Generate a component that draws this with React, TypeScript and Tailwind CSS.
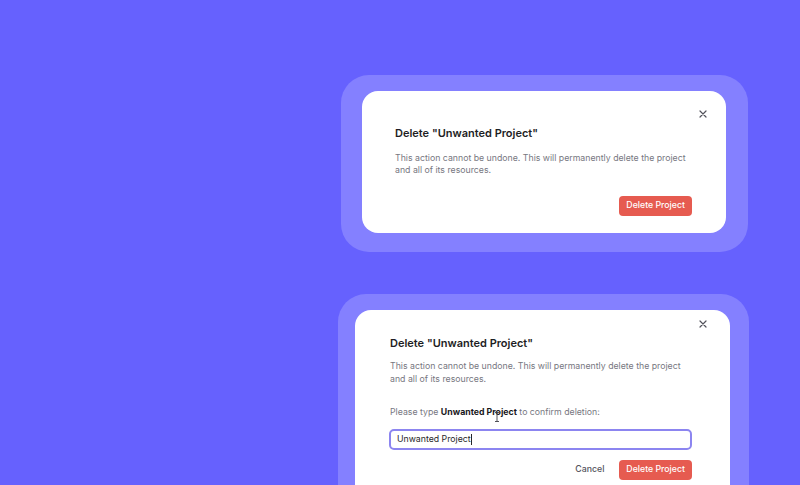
import React from "react";

function CloseIcon() {
  return (
    <svg width="8" height="8" viewBox="0 0 8 8" fill="none" stroke="#52525b" strokeWidth="1.2" strokeLinecap="round">
      <path d="M1 1L7 7M7 1L1 7" />
    </svg>
  );
}

export default function App() {
  return (
    <div
      className="w-[800px] h-[485px] overflow-hidden bg-[#6661fe] flex flex-col"
      style={{ fontFamily: "Inter, 'Noto Sans', sans-serif" }}
    >
      {/* Top dialog */}
      <div className="ml-[341px] mt-[75px] w-[407px] h-[177px] shrink-0 rounded-[28px] bg-[#8480ff] pt-[16px] pl-[21px]">
        <div className="relative w-[364px] h-[142px] rounded-[16px] bg-white pl-[33px] pr-[30px] pt-[34px] flex flex-col">
          <div className="absolute top-[19px] right-[19px]">
            <CloseIcon />
          </div>
          <div className="text-[11px] leading-[16px] font-semibold text-[#1e1e24]">Delete "Unwanted Project"</div>
          <div className="mt-[11px] text-[8.75px] leading-[12px] text-[#77777f]">
            This action cannot be undone. This will permanently delete the project and all of its resources.
          </div>
          <div className="mt-[20px] pr-[4px] flex justify-end">
            <button className="h-[20px] px-[7px] rounded-[4px] bg-[#e65b50] text-white text-[8.75px] font-medium">
              Delete Project
            </button>
          </div>
        </div>
      </div>

      {/* Bottom dialog */}
      <div className="ml-[338px] mt-[42px] w-[411px] h-[240px] shrink-0 rounded-[28px] bg-[#8480ff] pt-[16px] pl-[17px]">
        <div className="relative w-[375px] h-[240px] rounded-[16px] bg-white pl-[35px] pr-[38px] pt-[25px] flex flex-col">
          <div className="absolute top-[10px] right-[23px]">
            <CloseIcon />
          </div>
          <div className="text-[11px] leading-[16px] font-semibold text-[#1e1e24]">Delete "Unwanted Project"</div>
          <div className="mt-[9px] text-[8.75px] leading-[13px] text-[#77777f]">
            This action cannot be undone. This will permanently delete the project and all of its resources.
          </div>
          <div className="relative mt-[20px] text-[8.75px] leading-[13px] text-[#77777f]">
            Please type <span className="font-bold text-[#18181b]">Unwanted Project</span> to confirm deletion:
            <svg className="absolute left-[104px] top-[6px]" width="6" height="10" viewBox="0 0 6 10" fill="none" stroke="#3f3f46" strokeWidth="0.9">
              <path d="M1 0.5H5M3 0.5V9.5M1 9.5H5" />
            </svg>
          </div>
          <div className="mt-[10px] -ml-[1px] h-[21px] rounded-[5px] border-2 border-[#8c85f0] flex items-center pl-[6px] text-[8.75px] text-[#27272a]">
            Unwanted Project
            <span className="ml-[0.5px] w-[1px] h-[11px] bg-[#27272a]" />
          </div>
          <div className="mt-[10px] flex justify-end items-center gap-[15px]">
            <button className="text-[8.75px] font-medium text-[#52525b]">Cancel</button>
            <button className="h-[20px] px-[7px] rounded-[4px] bg-[#e65b50] text-white text-[8.75px] font-medium">
              Delete Project
            </button>
          </div>
        </div>
      </div>
    </div>
  );
}
